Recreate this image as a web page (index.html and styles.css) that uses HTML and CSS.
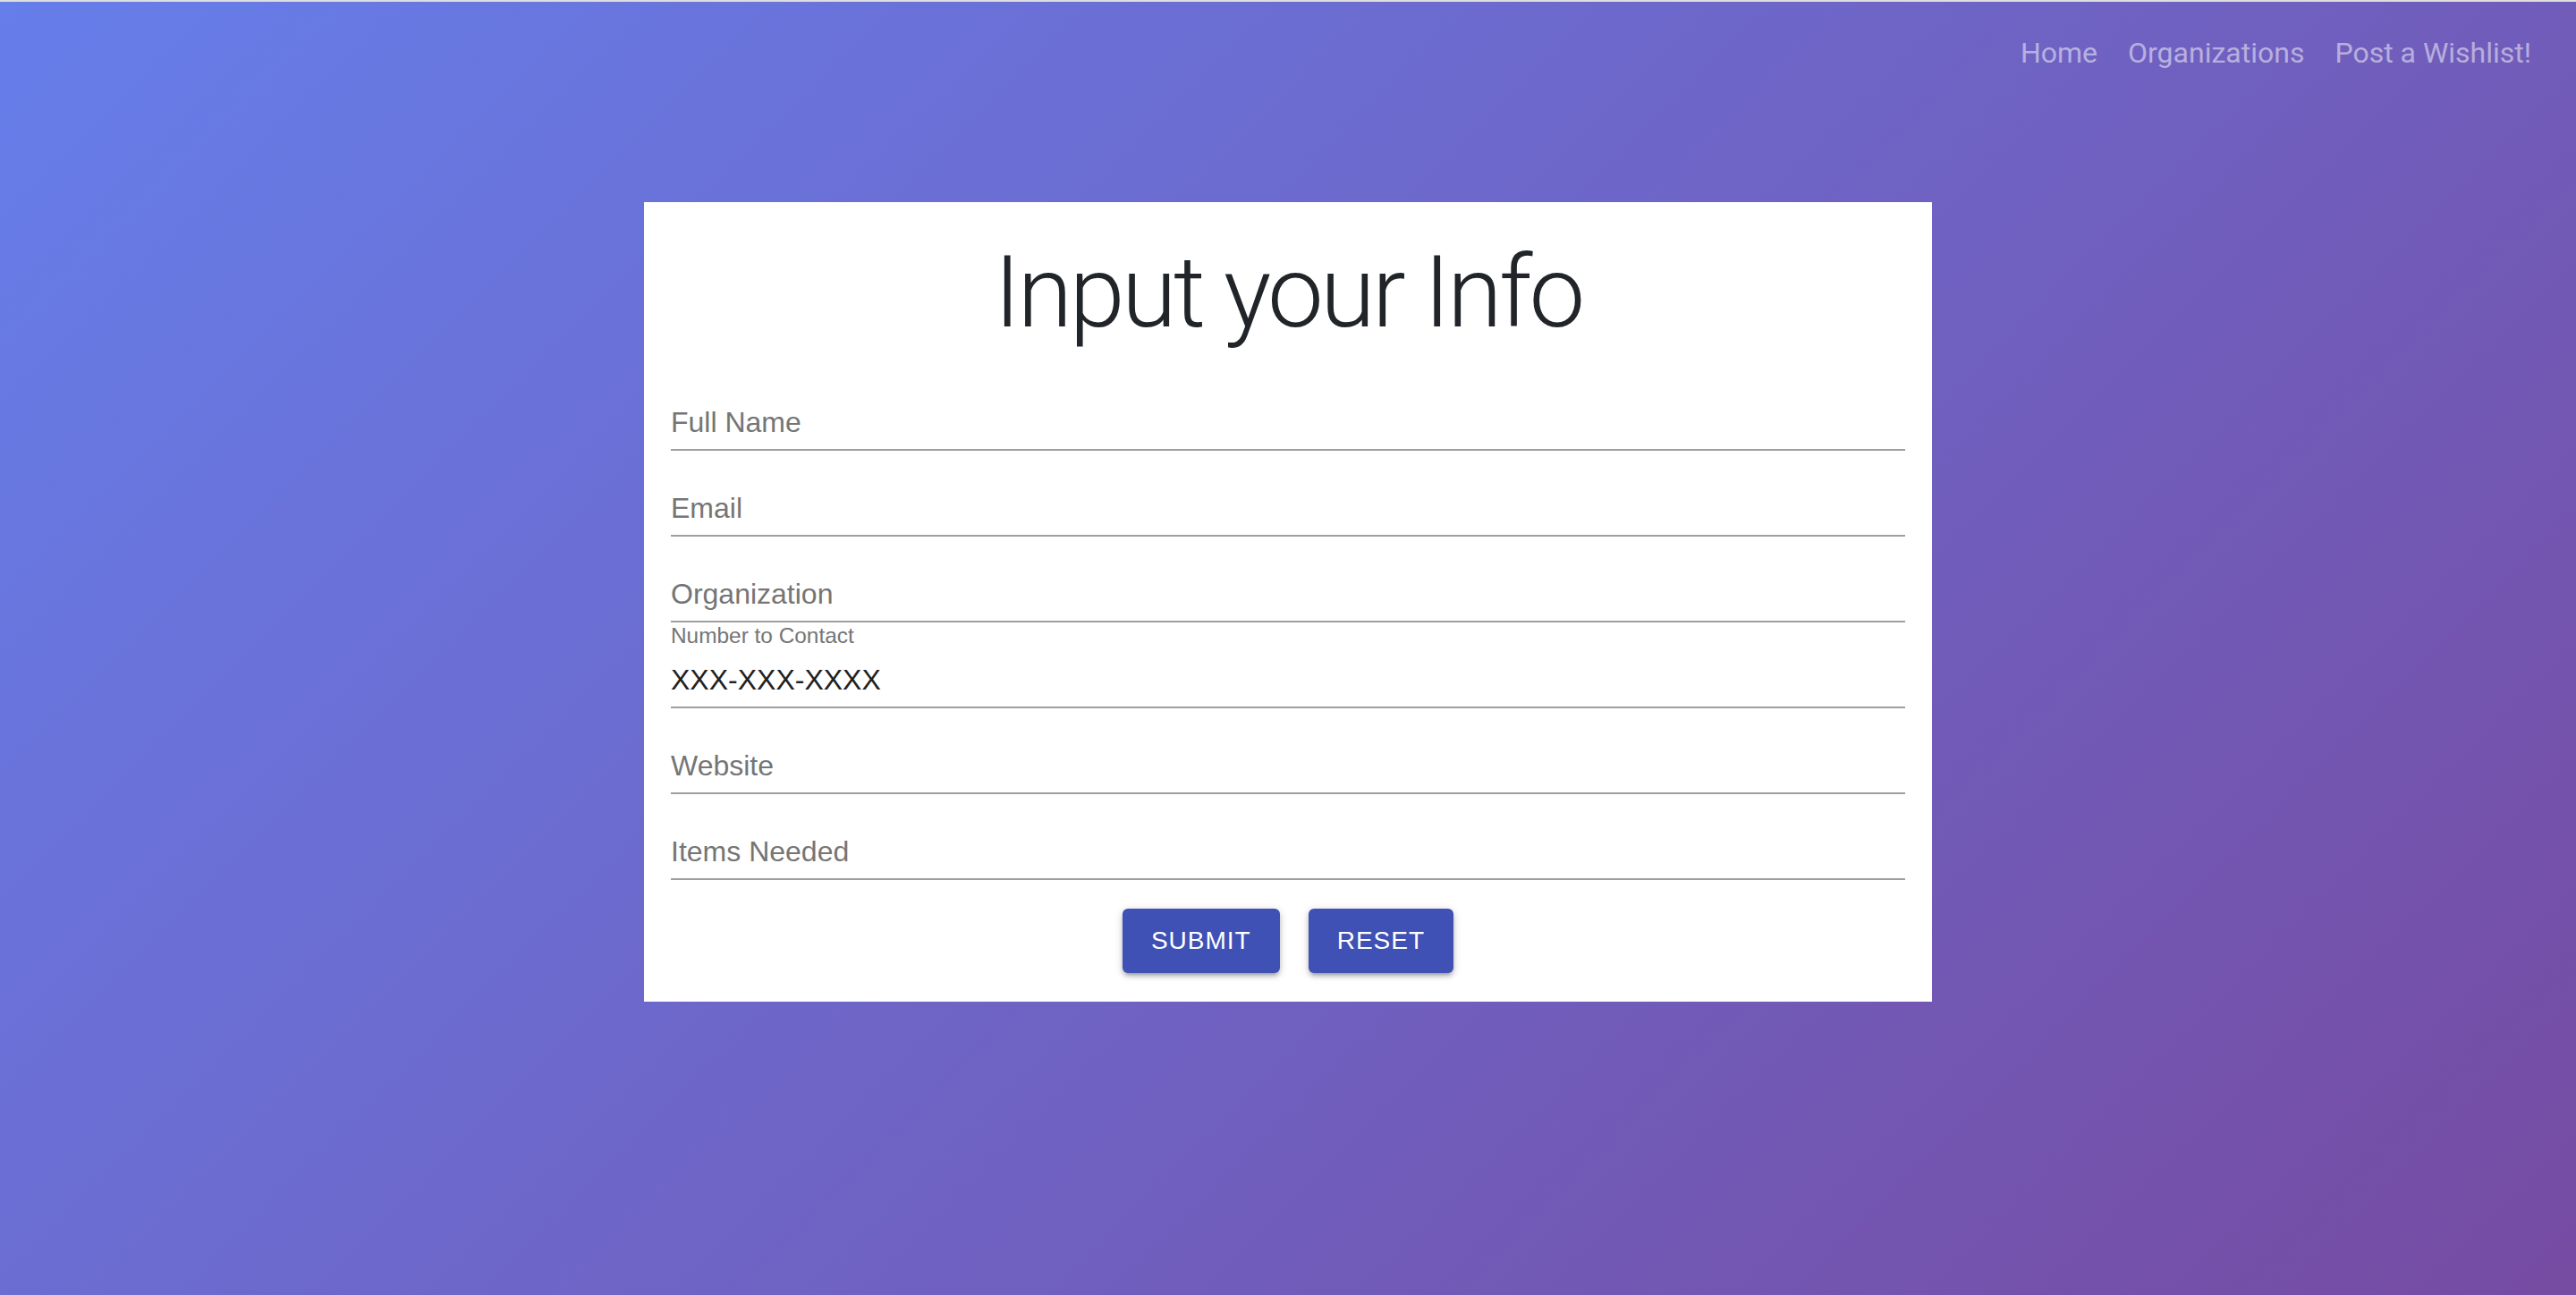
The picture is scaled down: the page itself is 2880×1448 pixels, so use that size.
FILE: index.html
```html
<!DOCTYPE html>
<html lang="en">
<head>
<meta charset="utf-8">
<title>Input your Info</title>
<link rel="stylesheet" href="styles.css">
</head>
<body>
<div class="topline"></div>
<nav class="navbar">
  <a class="nav-link" href="#">Home</a>
  <a class="nav-link" href="#">Organizations</a>
  <a class="nav-link" href="#">Post a Wishlist!</a>
</nav>
<main class="main">
  <form class="card">
    <h1 class="title">Input your Info</h1>
    <div class="field"><span class="placeholder">Full Name</span></div>
    <div class="field"><span class="placeholder">Email</span></div>
    <div class="field"><span class="placeholder">Organization</span></div>
    <div class="field"><span class="small-label">Number to Contact</span><span class="value">XXX-XXX-XXXX</span></div>
    <div class="field"><span class="placeholder">Website</span></div>
    <div class="field"><span class="placeholder">Items Needed</span></div>
    <div class="actions">
      <button type="button" class="btn">Submit</button>
      <button type="button" class="btn">Reset</button>
    </div>
  </form>
</main>
</body>
</html>
```

FILE: styles.css
```css
html, body {
  margin: 0;
  padding: 0;
}
body {
  min-height: 1448px;
  background: linear-gradient(135deg, #667eea 0%, #764ba2 100%);
  font-family: "Liberation Sans", Arial, sans-serif;
}
.topline {
  height: 2px;
  background: #dedede;
}
.navbar {
  display: flex;
  justify-content: flex-end;
  gap: 34px;
  padding: 33px 50px 0 0;
  height: 49px;
}
.nav-link {
  font-family: "Roboto", "Inter", sans-serif;
  font-size: 32px;
  line-height: 48px;
  color: rgba(255, 255, 255, 0.5);
  text-decoration: none;
}
.main {
  padding-top: 142px;
}
.card {
  display: flex;
  flex-direction: column;
  width: 1440px;
  margin: 0 auto;
  box-sizing: border-box;
  background: #fff;
  padding: 36px 30px 32px;
}
.title {
  margin: 0 0 16px;
  text-align: center;
  font-family: "Roboto", "Inter", sans-serif;
  font-weight: 300;
  font-size: 112px;
  line-height: 130px;
  letter-spacing: -3.6px;
  color: #212529;
}
.field {
  display: flex;
  flex-direction: column;
  justify-content: flex-end;
  height: 96px;
  box-sizing: border-box;
  padding-bottom: 10px;
  border-bottom: 2px solid #9e9e9e;
}
.placeholder, .value {
  font-size: 32px;
  line-height: 40px;
  color: #757575;
}
.value {
  color: #212121;
}
.small-label {
  font-size: 24.4px;
  line-height: 30px;
  color: #757575;
  margin-bottom: auto;
}
.actions {
  display: flex;
  justify-content: center;
  gap: 32px;
  margin-top: 32px;
}
.btn {
  height: 72px;
  padding: 0 32px;
  border: none;
  border-radius: 6px;
  background: #3f51b5;
  color: #fff;
  font-family: "Liberation Sans", Arial, sans-serif;
  font-size: 28px;
  letter-spacing: 1px;
  text-transform: uppercase;
  box-shadow: 0 4px 4px 0 rgba(0,0,0,0.14), 0 6px 2px -4px rgba(0,0,0,0.12), 0 2px 10px 0 rgba(0,0,0,0.2);
  cursor: pointer;
}
```
